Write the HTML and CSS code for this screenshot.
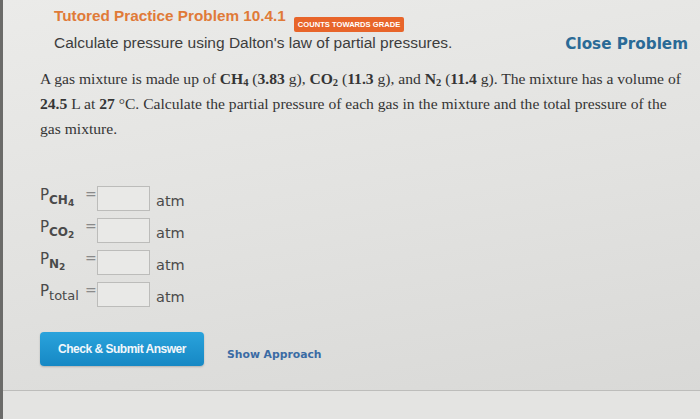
FILE: index.html
```html
<!DOCTYPE html>
<html>
<head>
<meta charset="utf-8">
<link rel="stylesheet" href="styles.css">
</head>
<body>
<div class="frame">
  <div class="content">
    <header class="head">
      <div class="titles">
        <div class="title-row">
          <span class="title">Tutored Practice Problem 10.4.1</span>
          <span class="badge">COUNTS TOWARDS GRADE</span>
        </div>
        <div class="subtitle">Calculate pressure using Dalton's law of partial pressures.</div>
      </div>
      <a class="close">Close Problem</a>
    </header>

    <p class="question">A gas mixture is made up of <b>CH<sub>4</sub></b> (<b>3.83</b> g), <b>CO<sub>2</sub></b> (<b>11.3</b> g), and <b>N<sub>2</sub></b> (<b>11.4</b> g). The mixture has a volume of <b>24.5</b> L at <b>27</b> °C. Calculate the partial pressure of each gas in the mixture and the total pressure of the gas mixture.</p>

    <div class="answers">
      <div class="row"><span class="lbl">P<sub>CH<sub class="s2">4</sub></sub></span><span class="eq">=</span><span class="box"></span><span class="unit">atm</span></div>
      <div class="row"><span class="lbl">P<sub>CO<sub class="s2">2</sub></sub></span><span class="eq">=</span><span class="box"></span><span class="unit">atm</span></div>
      <div class="row"><span class="lbl">P<sub>N<sub class="s2">2</sub></sub></span><span class="eq">=</span><span class="box"></span><span class="unit">atm</span></div>
      <div class="row"><span class="lbl">P<sub class="norm">total</sub></span><span class="eq">=</span><span class="box"></span><span class="unit">atm</span></div>
    </div>

    <div class="actions">
      <button class="submit">Check &amp; Submit Answer</button>
      <a class="approach">Show Approach</a>
    </div>
  </div>
  <div class="footer"></div>
</div>
</body>
</html>
```

FILE: styles.css
```css
html, body {
  margin: 0;
  padding: 0;
  width: 700px;
  height: 419px;
  overflow: hidden;
}
body {
  background: linear-gradient(170deg, #ebebe9 0%, #e2e2e0 50%, #d8d8d6 100%);
  font-family: "Liberation Sans", Arial, sans-serif;
}
.frame {
  height: 419px;
  border-left: 3px solid #6b6b69;
  box-sizing: border-box;
  display: flex;
  flex-direction: column;
}
.content {
  flex: 1;
  padding-left: 37px;
  padding-right: 12px;
}
.head {
  display: flex;
  justify-content: space-between;
  align-items: flex-start;
  padding-left: 14px;
  padding-top: 7px;
}
.title-row {
  display: flex;
  align-items: flex-end;
  gap: 8px;
}
.title {
  color: #e07a38;
  font-weight: bold;
  font-size: 15.3px;
}
.badge {
  background: #e8652a;
  color: #fff;
  font-size: 7.6px;
  font-weight: bold;
  padding: 3px 4px;
  border-radius: 2px;
  margin-bottom: -7px;
}
.subtitle {
  color: #3d3d3d;
  font-size: 15.5px;
  margin-top: 9px;
}
.close {
  font-family: "DejaVu Sans", Verdana, sans-serif;
  color: #2a6a96;
  font-weight: bold;
  font-size: 15.2px;
  margin-top: 28px;
}
.question {
  font-family: "Liberation Serif", "Times New Roman", serif;
  color: #353535;
  font-size: 15.6px;
  line-height: 25px;
  margin: 13px 0 0 0;
}
.question sub {
  font-size: 10.5px;
  line-height: 0;
  vertical-align: -2px;
}
.answers {
  margin-top: 44px;
  display: flex;
  flex-direction: column;
  gap: 6px;
}
.row {
  display: flex;
  align-items: center;
  height: 26px;
  font-family: "DejaVu Sans", Verdana, sans-serif;
  color: #4a4a4a;
}
.lbl {
  width: 45px;
  font-size: 15px;
  margin-top: -6px;
}
.lbl sub {
  font-size: 12px;
  font-weight: bold;
  line-height: 0;
}
.lbl sub.norm {
  font-weight: normal;
  font-size: 13px;
}
.lbl sub .s2 {
  font-size: 9px;
  vertical-align: -2px;
}
.eq {
  width: 12px;
  font-size: 14px;
  color: #8a8a8a;
  margin-top: -8px;
}
.box {
  width: 53px;
  height: 25px;
  border: 1px solid #bcbcba;
  background: #e9e9e7;
  box-sizing: border-box;
}
.unit {
  font-size: 14.5px;
  margin-left: 6px;
  margin-top: 6px;
}
.actions {
  margin-top: 25px;
  display: flex;
  align-items: center;
  gap: 23px;
}
.submit {
  width: 164px;
  height: 34px;
  border: none;
  border-radius: 4px;
  background: linear-gradient(#2aa3dc, #1688c4);
  color: #f2f7fb;
  font-family: "Liberation Sans", Arial, sans-serif;
  font-weight: bold;
  font-size: 12px;
  letter-spacing: -0.5px;
  box-shadow: 0 1px 2px rgba(0,0,0,0.2);
}
.approach {
  font-family: "DejaVu Sans", Verdana, sans-serif;
  color: #3a6ba4;
  font-weight: bold;
  font-size: 10.8px;
  margin-top: 10px;
}
.footer {
  height: 28px;
  border-top: 1px solid #bdbdbb;
  background: #e4e4e2;
}
```
